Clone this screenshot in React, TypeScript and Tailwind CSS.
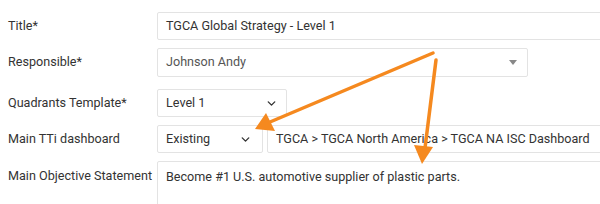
import { ChevronDown } from "lucide-react"

const box = "h-[28px] border border-[#e3e3e3] rounded-[2px] bg-white flex items-center px-2 text-[12.6px] text-[#333]"

function Row({ label, children, className = "" }: { label: string; children: React.ReactNode; className?: string }) {
  return (
    <div className={`flex items-center ${className}`}>
      <div className="w-[157px] shrink-0 pl-[8px] text-[12.6px] text-[#333]">{label}</div>
      {children}
    </div>
  )
}

export default function App() {
  return (
    <div className="relative w-[600px] h-[204px] overflow-hidden bg-white" style={{ fontFamily: "Roboto, 'Noto Sans', sans-serif" }}>
      <div className="flex flex-col gap-[8px] pt-[12px]">
        <Row label="Title*">
          <div className={`${box} flex-1 -mr-[4px]`}>TGCA Global Strategy - Level 1</div>
        </Row>
        <Row label="Responsible*" className="mb-[4px]">
          <div className={`${box} h-[29px] w-[371px] justify-between text-[#555]`}>
            <span>Johnson Andy</span>
            <span className="w-0 h-0 border-l-[4px] border-r-[4px] border-t-[5px] border-l-transparent border-r-transparent border-t-[#888] mr-[2px]" />
          </div>
        </Row>
        <Row label="Quadrants Template*">
          <div className={`${box} w-[130px] justify-between`}>
            <span>Level 1</span>
            <ChevronDown size={13} strokeWidth={2.5} className="text-[#333]" />
          </div>
        </Row>
        <Row label="Main TTi dashboard">
          <div className="flex flex-1 gap-[4px] -mr-[4px]">
            <div className={`${box} w-[106px] justify-between`}>
              <span>Existing</span>
              <ChevronDown size={13} strokeWidth={2.5} className="text-[#333] mr-[2px]" />
            </div>
            <div className={`${box} flex-1 whitespace-nowrap`}>TGCA &gt; TGCA North America &gt; TGCA NA ISC Dashboard</div>
          </div>
        </Row>
        <div className="flex items-start">
          <div className="w-[157px] shrink-0 pl-[8px] pt-[6px] text-[12.6px] text-[#333]">Main Objective Statement</div>
          <div className="flex-1 h-[70px] -mr-[4px] border border-[#e3e3e3] rounded-[2px] px-2 pt-[6px] text-[12.6px] text-[#333]">
            Become #1 U.S. automotive supplier of plastic parts.
          </div>
        </div>
      </div>

      <svg className="absolute inset-0 pointer-events-none" width="600" height="204" viewBox="0 0 600 204">
        <g stroke="#f5891f" strokeWidth="3.5" strokeLinecap="round" fill="none">
          <line x1="433" y1="53" x2="270" y2="122" />
          <line x1="436" y1="60" x2="425" y2="148" />
        </g>
        <g fill="#f5891f">
          <polygon points="255,129 266,113 275,131" />
          <polygon points="422,164 414,145 433,147" />
        </g>
      </svg>
    </div>
  )
}
